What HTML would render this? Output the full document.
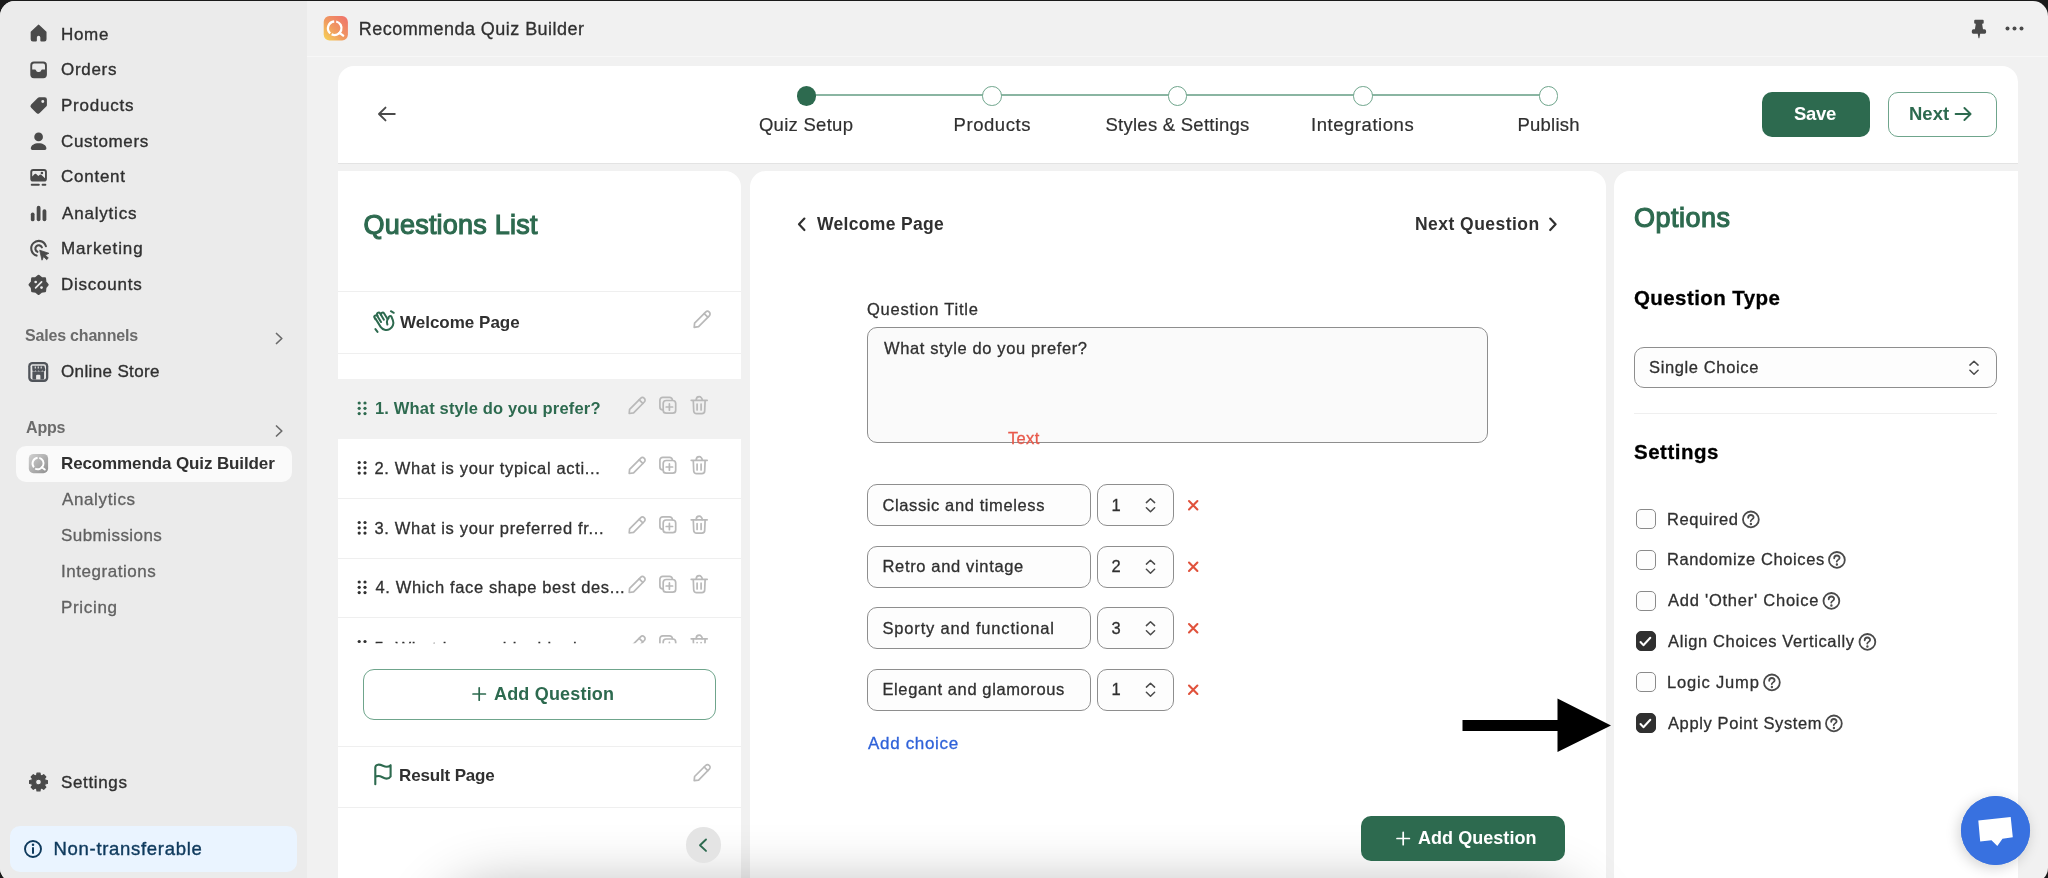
<!DOCTYPE html>
<html><head><meta charset="utf-8"><title>Recommenda Quiz Builder</title>
<style>
*{box-sizing:border-box;margin:0;padding:0}
html,body{width:2048px;height:878px;overflow:hidden;background:#1a1a1a;font-family:"Liberation Sans",sans-serif;color:#303030}
#win{position:absolute;left:0;top:1px;width:2048px;height:881px;border-radius:15px 15px 14px 14px;background:#f1f1f1;overflow:hidden;will-change:transform}
#side{position:absolute;left:0;top:0;width:307px;height:881px;background:#ebebeb}
.a{position:absolute}
.card{position:absolute;background:#fff}
.t{position:absolute;white-space:nowrap}
.inp{position:absolute;border:1px solid #8e8e8e;border-radius:10px;background:#fdfdfd}
.ln{position:absolute;height:1px;background:#efefef}
.cb{position:absolute;left:1635.5px;width:20px;height:20px;border:1px solid #8a8a8a;border-radius:5px;background:#fdfdfd}
.cb.on{background:#303030;border-color:#303030}
svg{position:absolute;overflow:visible}
</style></head><body>
<div id="win">
<div id="side"></div>

<div class="a" style="left:307px;top:54.5px;width:1741px;height:1px;background:#f7f7f7"></div>
<div class="card" style="left:338px;top:64.5px;width:1679.5px;height:97px;border-radius:16px 16px 0 0;box-shadow:0 1px 0 #e3e3e3"></div>
<div class="card" id="ql" style="left:338px;top:169.5px;width:403px;height:720px;border-radius:0 16px 0 0"></div>
<div class="card" id="mid" style="left:749.5px;top:169.5px;width:856px;height:720px;border-radius:16px 16px 0 0"></div>
<div class="card" id="opt" style="left:1613.5px;top:169.5px;width:404px;height:720px;border-radius:16px 0 0 0"></div>
<div class="a" style="left:438px;top:887px;width:1150px;height:120px;border-radius:70px;box-shadow:0 0 60px 0 rgba(0,0,0,.31)"></div>
<div class="a" style="left:16px;top:445px;width:275.5px;height:35.5px;border-radius:10px;background:#fafafa"></div>
<div class="a" style="left:10px;top:825px;width:287px;height:46px;border-radius:10px;background:#eaf4ff"></div>
<div class="a" style="left:806px;top:93px;width:742px;height:2px;background:#8ab5a2"></div>
<div class="a" style="left:796.5px;top:85px;width:19.5px;height:19.5px;border-radius:50%;background:#2d6a4f"></div>
<div class="a" style="left:982.0px;top:85px;width:19.5px;height:19.5px;border-radius:50%;background:#fff;border:1.3px solid #6fa58c"></div>
<div class="a" style="left:1167.5px;top:85px;width:19.5px;height:19.5px;border-radius:50%;background:#fff;border:1.3px solid #6fa58c"></div>
<div class="a" style="left:1353.25px;top:85px;width:19.5px;height:19.5px;border-radius:50%;background:#fff;border:1.3px solid #6fa58c"></div>
<div class="a" style="left:1538.5px;top:85px;width:19.5px;height:19.5px;border-radius:50%;background:#fff;border:1.3px solid #6fa58c"></div>
<div class="a" style="left:1761.5px;top:91px;width:108.5px;height:44.5px;border-radius:10px;background:#2d6a4f"></div>
<div class="a" style="left:1888px;top:91px;width:108.5px;height:44.5px;border-radius:10px;background:#fff;border:1px solid #6fa58c"></div>
<div class="ln" style="left:338px;top:290px;width:403px"></div>
<div class="ln" style="left:338px;top:351.5px;width:403px"></div>
<div class="a" style="left:338px;top:377.5px;width:403px;height:60px;background:#f1f1f1"></div>
<div class="ln" style="left:338px;top:497px;width:403px"></div>
<div class="ln" style="left:338px;top:556.5px;width:403px"></div>
<div class="ln" style="left:338px;top:616px;width:403px"></div>
<div class="ln" style="left:338px;top:744.5px;width:403px"></div>
<div class="ln" style="left:338px;top:805.5px;width:403px"></div>
<div class="a" style="left:363px;top:668px;width:353px;height:50.5px;border-radius:11px;background:#fff;border:1px solid #6fa58c"></div>
<div class="a" style="left:685.5px;top:826px;width:35.5px;height:35.5px;border-radius:50%;background:#e4e4e4"></div>
<div class="inp" style="left:867px;top:325.5px;width:621px;height:116.5px;background:#fafafa"></div>
<div class="inp" style="left:867px;top:483px;width:224px;height:42px"></div>
<div class="inp" style="left:1097px;top:483px;width:77px;height:42px"></div>
<div class="inp" style="left:867px;top:544.5px;width:224px;height:42px"></div>
<div class="inp" style="left:1097px;top:544.5px;width:77px;height:42px"></div>
<div class="inp" style="left:867px;top:606px;width:224px;height:42px"></div>
<div class="inp" style="left:1097px;top:606px;width:77px;height:42px"></div>
<div class="inp" style="left:867px;top:668px;width:224px;height:42px"></div>
<div class="inp" style="left:1097px;top:668px;width:77px;height:42px"></div>
<div class="a" style="left:1361px;top:815px;width:204px;height:45px;border-radius:10px;background:#2d6a4f"></div>
<div class="inp" style="left:1634px;top:346px;width:363px;height:41px"></div>
<div class="ln" style="left:1634px;top:412px;width:363px"></div>
<div class="cb" style="top:508px"></div>
<div class="cb" style="top:549px"></div>
<div class="cb" style="top:589.5px"></div>
<div class="cb on" style="top:630px"></div>
<div class="cb" style="top:671px"></div>
<div class="cb on" style="top:712px"></div>
<div class="a" style="left:1961px;top:795px;width:69px;height:69px;border-radius:50%;background:#3871e0;box-shadow:-2px 3px 14px rgba(0,0,0,.18)"></div>
<div class="t" style="left:61.00px;top:25px;font-size:17px;line-height:17px;color:#303030;letter-spacing:0.667px;-webkit-text-stroke:0.35px #303030;">Home</div>
<div class="t" style="left:61.00px;top:60px;font-size:17px;line-height:17px;color:#303030;letter-spacing:0.700px;-webkit-text-stroke:0.35px #303030;">Orders</div>
<div class="t" style="left:61.00px;top:96px;font-size:17px;line-height:17px;color:#303030;letter-spacing:0.786px;-webkit-text-stroke:0.35px #303030;">Products</div>
<div class="t" style="left:61.00px;top:132px;font-size:17px;line-height:17px;color:#303030;letter-spacing:0.625px;-webkit-text-stroke:0.35px #303030;">Customers</div>
<div class="t" style="left:61.00px;top:167px;font-size:17px;line-height:17px;color:#303030;letter-spacing:0.750px;-webkit-text-stroke:0.35px #303030;">Content</div>
<div class="t" style="left:62.00px;top:204px;font-size:17px;line-height:17px;color:#303030;letter-spacing:0.812px;-webkit-text-stroke:0.35px #303030;">Analytics</div>
<div class="t" style="left:61.00px;top:239px;font-size:17px;line-height:17px;color:#303030;letter-spacing:0.875px;-webkit-text-stroke:0.35px #303030;">Marketing</div>
<div class="t" style="left:61.00px;top:275px;font-size:17px;line-height:17px;color:#303030;letter-spacing:0.750px;-webkit-text-stroke:0.35px #303030;">Discounts</div>
<div class="t" style="left:61.00px;top:362px;font-size:17px;line-height:17px;color:#303030;letter-spacing:0.364px;-webkit-text-stroke:0.35px #303030;">Online Store</div>
<div class="t" style="left:61.00px;top:773px;font-size:17px;line-height:17px;color:#303030;letter-spacing:0.643px;-webkit-text-stroke:0.35px #303030;">Settings</div>
<div class="t" style="left:25.00px;top:327px;font-size:16px;line-height:16px;color:#6b6b6b;letter-spacing:-0.192px;font-weight:bold;">Sales channels</div>
<div class="t" style="left:26.00px;top:419px;font-size:16px;line-height:16px;color:#6b6b6b;letter-spacing:-0.167px;font-weight:bold;">Apps</div>
<div class="t" style="left:61.00px;top:454px;font-size:17px;line-height:17px;color:#303030;letter-spacing:-0.114px;font-weight:bold;">Recommenda Quiz Builder</div>
<div class="t" style="left:62.00px;top:490px;font-size:17px;line-height:17px;color:#616161;letter-spacing:0.625px;-webkit-text-stroke:0.3px #616161;">Analytics</div>
<div class="t" style="left:61.00px;top:526px;font-size:17px;line-height:17px;color:#616161;letter-spacing:0.450px;-webkit-text-stroke:0.3px #616161;">Submissions</div>
<div class="t" style="left:61.00px;top:562px;font-size:17px;line-height:17px;color:#616161;letter-spacing:0.545px;-webkit-text-stroke:0.3px #616161;">Integrations</div>
<div class="t" style="left:61.00px;top:598px;font-size:17px;line-height:17px;color:#616161;letter-spacing:0.667px;-webkit-text-stroke:0.3px #616161;">Pricing</div>
<div class="t" style="left:53.50px;top:839px;font-size:18.5px;line-height:18.5px;color:#0f3a5d;letter-spacing:0.700px;-webkit-text-stroke:0.4px #0f3a5d;">Non-transferable</div>
<div class="t" style="left:358.80px;top:19px;font-size:18px;line-height:18px;color:#303030;letter-spacing:0.455px;-webkit-text-stroke:0.3px #303030;">Recommenda Quiz Builder</div>
<div class="t" style="left:758.95px;top:115px;font-size:18.5px;line-height:18.5px;color:#303030;letter-spacing:0.278px;-webkit-text-stroke:0.2px #303030;">Quiz Setup</div>
<div class="t" style="left:953.50px;top:115px;font-size:18.5px;line-height:18.5px;color:#303030;letter-spacing:0.571px;-webkit-text-stroke:0.2px #303030;">Products</div>
<div class="t" style="left:1105.50px;top:115px;font-size:18.5px;line-height:18.5px;color:#303030;letter-spacing:0.250px;-webkit-text-stroke:0.2px #303030;">Styles &amp; Settings</div>
<div class="t" style="left:1311.00px;top:115px;font-size:18.5px;line-height:18.5px;color:#303030;letter-spacing:0.545px;-webkit-text-stroke:0.2px #303030;">Integrations</div>
<div class="t" style="left:1517.45px;top:115px;font-size:18.5px;line-height:18.5px;color:#303030;letter-spacing:0.250px;-webkit-text-stroke:0.2px #303030;">Publish</div>
<div class="t" style="left:1794.00px;top:104px;font-size:18.5px;line-height:18.5px;color:#fff;letter-spacing:-0.333px;font-weight:bold;">Save</div>
<div class="t" style="left:1909.00px;top:104px;font-size:18.5px;line-height:18.5px;color:#2d6a4f;font-weight:bold;">Next</div>
<div class="t" style="left:363.50px;top:211px;font-size:27px;line-height:27px;color:#2d6a4f;letter-spacing:0.215px;-webkit-text-stroke:1.15px #2d6a4f;">Questions List</div>
<div class="t" style="left:400.00px;top:313px;font-size:17px;line-height:17px;color:#303030;font-weight:bold;">Welcome Page</div>
<div class="t" style="left:375.00px;top:399px;font-size:16.5px;line-height:16.5px;color:#2d6a4f;letter-spacing:0.167px;font-weight:bold;">1. What style do you prefer?</div>
<div class="t" style="left:374.50px;top:459px;font-size:16.5px;line-height:16.5px;color:#303030;letter-spacing:0.667px;-webkit-text-stroke:0.3px #303030;">2. What is your typical acti...</div>
<div class="t" style="left:374.50px;top:519px;font-size:16.5px;line-height:16.5px;color:#303030;letter-spacing:0.667px;-webkit-text-stroke:0.3px #303030;">3. What is your preferred fr...</div>
<div class="t" style="left:375.50px;top:578px;font-size:16.5px;line-height:16.5px;color:#303030;letter-spacing:0.633px;-webkit-text-stroke:0.3px #303030;">4. Which face shape best des...</div>
<div class="t" style="left:374.50px;top:639px;font-size:16.5px;line-height:16.5px;color:#303030;letter-spacing:0.857px;-webkit-text-stroke:0.3px #303030;">5. What is your ideal budg...</div>
<div class="t" style="left:494.00px;top:684px;font-size:18px;line-height:18px;color:#2d6a4f;letter-spacing:0.182px;font-weight:bold;">Add Question</div>
<div class="t" style="left:399.00px;top:766px;font-size:17px;line-height:17px;color:#303030;letter-spacing:-0.150px;font-weight:bold;">Result Page</div>
<div class="t" style="left:817.00px;top:215px;font-size:17.5px;line-height:17.5px;color:#303030;letter-spacing:0.318px;font-weight:bold;">Welcome Page</div>
<div class="t" style="left:1415.00px;top:215px;font-size:17.5px;line-height:17.5px;color:#303030;letter-spacing:0.458px;font-weight:bold;">Next Question</div>
<div class="t" style="left:867.00px;top:300px;font-size:16.5px;line-height:16.5px;color:#303030;letter-spacing:0.769px;-webkit-text-stroke:0.3px #303030;">Question Title</div>
<div class="t" style="left:884.00px;top:339px;font-size:16.5px;line-height:16.5px;color:#303030;letter-spacing:0.625px;-webkit-text-stroke:0.3px #303030;">What style do you prefer?</div>
<div class="t" style="left:1008.00px;top:429px;font-size:16.5px;line-height:16.5px;color:#e8594b;letter-spacing:0.333px;-webkit-text-stroke:0.3px #e8594b;">Text</div>
<div class="t" style="left:882.50px;top:496px;font-size:16.5px;line-height:16.5px;color:#303030;letter-spacing:0.605px;-webkit-text-stroke:0.3px #303030;">Classic and timeless</div>
<div class="t" style="left:1111.50px;top:496px;font-size:16.5px;line-height:16.5px;color:#303030;-webkit-text-stroke:0.3px #303030;">1</div>
<div class="t" style="left:882.50px;top:557px;font-size:16.5px;line-height:16.5px;color:#303030;letter-spacing:0.656px;-webkit-text-stroke:0.3px #303030;">Retro and vintage</div>
<div class="t" style="left:1111.50px;top:557px;font-size:16.5px;line-height:16.5px;color:#303030;-webkit-text-stroke:0.3px #303030;">2</div>
<div class="t" style="left:882.50px;top:619px;font-size:16.5px;line-height:16.5px;color:#303030;letter-spacing:0.825px;-webkit-text-stroke:0.3px #303030;">Sporty and functional</div>
<div class="t" style="left:1111.50px;top:619px;font-size:16.5px;line-height:16.5px;color:#303030;-webkit-text-stroke:0.3px #303030;">3</div>
<div class="t" style="left:882.50px;top:680px;font-size:16.5px;line-height:16.5px;color:#303030;letter-spacing:0.600px;-webkit-text-stroke:0.3px #303030;">Elegant and glamorous</div>
<div class="t" style="left:1111.50px;top:680px;font-size:16.5px;line-height:16.5px;color:#303030;-webkit-text-stroke:0.3px #303030;">1</div>
<div class="t" style="left:868.00px;top:734px;font-size:17px;line-height:17px;color:#2f62d9;letter-spacing:0.667px;-webkit-text-stroke:0.3px #2f62d9;">Add choice</div>
<div class="t" style="left:1418.00px;top:828px;font-size:18px;line-height:18px;color:#fff;letter-spacing:0.045px;font-weight:bold;">Add Question</div>
<div class="t" style="left:1634.00px;top:204px;font-size:27px;line-height:27px;color:#2d6a4f;letter-spacing:0.500px;-webkit-text-stroke:1.15px #2d6a4f;">Options</div>
<div class="t" style="left:1634.00px;top:287px;font-size:20.5px;line-height:20.5px;color:#000;letter-spacing:0.417px;font-weight:bold;-webkit-text-stroke:0.3px #000;">Question Type</div>
<div class="t" style="left:1649.00px;top:358px;font-size:16.5px;line-height:16.5px;color:#303030;letter-spacing:0.625px;-webkit-text-stroke:0.3px #303030;">Single Choice</div>
<div class="t" style="left:1634.00px;top:441px;font-size:20.5px;line-height:20.5px;color:#000;letter-spacing:0.500px;font-weight:bold;-webkit-text-stroke:0.3px #000;">Settings</div>
<div class="t" style="left:1667.00px;top:510px;font-size:16.5px;line-height:16.5px;color:#303030;letter-spacing:0.571px;-webkit-text-stroke:0.3px #303030;">Required</div>
<div class="t" style="left:1667.00px;top:550px;font-size:16.5px;line-height:16.5px;color:#303030;letter-spacing:0.594px;-webkit-text-stroke:0.3px #303030;">Randomize Choices</div>
<div class="t" style="left:1668.00px;top:591px;font-size:16.5px;line-height:16.5px;color:#303030;letter-spacing:0.765px;-webkit-text-stroke:0.3px #303030;">Add 'Other' Choice</div>
<div class="t" style="left:1668.00px;top:632px;font-size:16.5px;line-height:16.5px;color:#303030;letter-spacing:0.630px;-webkit-text-stroke:0.3px #303030;">Align Choices Vertically</div>
<div class="t" style="left:1667.00px;top:673px;font-size:16.5px;line-height:16.5px;color:#303030;letter-spacing:0.833px;-webkit-text-stroke:0.3px #303030;">Logic Jump</div>
<div class="t" style="left:1668.00px;top:714px;font-size:16.5px;line-height:16.5px;color:#303030;letter-spacing:0.618px;-webkit-text-stroke:0.3px #303030;">Apply Point System</div>
<svg style="left:0;top:-1px" width="2048" height="878" viewBox="0 0 2048 878" fill="none">
<defs><linearGradient id="og" x1="0" y1="1" x2="1" y2="0"><stop offset="0" stop-color="#f7d656"/><stop offset=".45" stop-color="#f09a60"/><stop offset="1" stop-color="#ef6f6c"/></linearGradient><linearGradient id="gg" x1="0" y1="0" x2="1" y2="1"><stop offset="0" stop-color="#d2d2d2"/><stop offset="1" stop-color="#8f8f8f"/></linearGradient></defs>
<g transform="translate(26.30 21.00) scale(1.23)" fill="#4a4a4a"><path d="M10 3.75L15.65 9.2V14.9a1 1 0 0 1-1 1H12.2V13.4a2.2 2.2 0 0 0-4.4 0v2.5H5.35a1 1 0 0 1-1-1V9.2z" stroke="#4a4a4a" stroke-width="1.6" stroke-linejoin="round"/></g>
<g transform="translate(26.30 57.55) scale(1.23)" fill="#4a4a4a"><path fill-rule="evenodd" d="M6.2 3.25h7.6a2.95 2.95 0 0 1 2.95 2.95v7.6a2.95 2.95 0 0 1-2.95 2.95H6.2a2.95 2.95 0 0 1-2.95-2.95V6.2A2.95 2.95 0 0 1 6.2 3.25zM6.3 4.9A1.5 1.5 0 0 0 4.8 6.4v3.3h2.3a.8.8 0 0 1 .75.55 2.25 2.25 0 0 0 4.3 0 .8.8 0 0 1 .75-.55h2.3V6.4a1.5 1.5 0 0 0-1.5-1.5z"/></g>
<g transform="translate(26.30 93.35) scale(1.23)" fill="#4a4a4a"><path fill-rule="evenodd" d="M10.6 3.25h4.4A1.75 1.75 0 0 1 16.75 5v4.4a1.9 1.9 0 0 1-.56 1.34l-5.3 5.3a1.9 1.9 0 0 1-2.68 0L3.96 11.8a1.9 1.9 0 0 1 0-2.68l5.3-5.3a1.9 1.9 0 0 1 1.34-.56zM13.4 7.8a1.2 1.2 0 1 0 0-2.4 1.2 1.2 0 0 0 0 2.4z"/></g>
<g transform="translate(26.30 128.90) scale(1.23)" fill="#4a4a4a"><circle cx="10" cy="6.5" r="3.55"/><path d="M3.7 15.6c0-2.3 2.8-4 6.3-4s6.3 1.7 6.3 4v.3a1.2 1.2 0 0 1-1.2 1.2H4.9a1.2 1.2 0 0 1-1.2-1.2z"/></g>
<g transform="translate(26.30 165.10) scale(1.23)" fill="#4a4a4a"><path fill-rule="evenodd" d="M5.6 3.1h8.8a2.35 2.35 0 0 1 2.35 2.35v5.6a2.35 2.35 0 0 1-2.35 2.35H5.6a2.35 2.35 0 0 1-2.35-2.35v-5.6A2.35 2.35 0 0 1 5.6 3.1zM5.7 4.7a.9.9 0 0 0-.9.9v3.6l2-1.9a.9.9 0 0 1 1.25 0l1.7 1.65 1.2-1.1a.9.9 0 0 1 1.2 0l3.05 2.8V5.6a.9.9 0 0 0-.9-.9z"/><circle cx="12.7" cy="6.4" r="1.05"/><rect x="3.6" y="15.2" width="7.4" height="1.6" rx=".8"/><rect x="12.4" y="15.2" width="3.9" height="1.6" rx=".8"/></g>
<g transform="translate(26.30 200.70) scale(1.23)" fill="#4a4a4a"><rect x="3.7" y="9.5" width="3" height="7.2" rx="1.5"/><rect x="8.45" y="4.1" width="3.1" height="12.6" rx="1.55"/><rect x="13.2" y="6.9" width="3.1" height="9.8" rx="1.55"/></g>
<g stroke="#4a4a4a" stroke-width="2.1" stroke-linecap="round" fill="none"><path d="M45.9 246.2A7.5 7.5 0 1 0 36.6 255.6"/><path d="M41.9 247.4A3.4 3.4 0 1 0 37.4 251.8"/></g>
<path d="M39.7 250.2l9.2 3.1-3.6 1.7 3 3.1-1.7 1.6-3-3.1-1.6 3.6z" fill="#4a4a4a" stroke="#4a4a4a" stroke-width=".8" stroke-linejoin="round"/>
<path d="M38.60 275.90 L41.36 278.15 L44.89 278.51 L45.25 282.04 L47.50 284.80 L45.25 287.56 L44.89 291.09 L41.36 291.45 L38.60 293.70 L35.84 291.45 L32.31 291.09 L31.95 287.56 L29.70 284.80 L31.95 282.04 L32.31 278.51 L35.84 278.15Z" fill="#4a4a4a" stroke="#4a4a4a" stroke-width="2.4" stroke-linejoin="round"/>
<g stroke="#ebebeb" stroke-width="1.7" stroke-linecap="round"><path d="M35.6 287.8L41.6 281.8"/></g><circle cx="35.7" cy="282" r="1.35" fill="#ebebeb"/><circle cx="41.5" cy="287.6" r="1.35" fill="#ebebeb"/>
<rect x="28.2" y="362" width="20.1" height="19.9" rx="4.2" fill="#50545a"/><rect x="30.5" y="364.3" width="15.5" height="15.3" rx="2" fill="#e9e9e9"/>
<path d="M32.2 365.7h12.1l1 3.9a1.6 1.6 0 0 1-3.2.5 1.65 1.65 0 0 1-3.3 0 1.65 1.65 0 0 1-3.3 0 1.6 1.6 0 0 1-3.2-.5z" fill="#50545a"/><path d="M32.4 371.6h11.7v6.6a1.2 1.2 0 0 1-1.2 1.2h-2.5v-3.6a1.1 1.1 0 0 0-1.1-1.1h-2.1a1.1 1.1 0 0 0-1.1 1.1v3.6h-2.5a1.2 1.2 0 0 1-1.2-1.2z" fill="#50545a"/>
<g stroke="#e9e9e9" stroke-width="1.1"><path d="M35.3 366.4v2.2M38.25 366.4v2.2M41.2 366.4v2.2"/></g>
<rect x="28.8" y="454" width="19.3" height="19.2" rx="4.6" fill="url(#gg)"/>
<g stroke="#fff" stroke-width="1.9" fill="none" stroke-linecap="butt"><path d="M37.6 457.8A5.8 5.8 0 0 0 33.9 467.3"/><path d="M35.2 468.6A5.8 5.8 0 1 0 39.3 457.8"/><path d="M41.7 467.2L44.8 469.6" stroke-linecap="round"/></g>
<path d="M45.15 780.16 L47.37 780.48 L47.37 783.52 L45.15 783.84 L44.50 785.40 L45.85 787.20 L43.70 789.35 L41.90 788.00 L40.34 788.65 L40.02 790.87 L36.98 790.87 L36.66 788.65 L35.10 788.00 L33.30 789.35 L31.15 787.20 L32.50 785.40 L31.85 783.84 L29.63 783.52 L29.63 780.48 L31.85 780.16 L32.50 778.60 L31.15 776.80 L33.30 774.65 L35.10 776.00 L36.66 775.35 L36.98 773.13 L40.02 773.13 L40.34 775.35 L41.90 776.00 L43.70 774.65 L45.85 776.80 L44.50 778.60ZM41.4 782a2.9 2.9 0 1 0 -5.8 0a2.9 2.9 0 1 0 5.8 0z" fill="#4a4a4a" fill-rule="evenodd" stroke="#4a4a4a" stroke-width="1.2" stroke-linejoin="round"/>
<circle cx="33" cy="849" r="8" stroke="#0f3a5d" stroke-width="1.9"/><path d="M33 848v5" stroke="#0f3a5d" stroke-width="2" stroke-linecap="round"/><circle cx="33" cy="844.7" r="1.25" fill="#0f3a5d"/>
<path d="M276.5 333.5l5.3 5-5.3 5" stroke="#6b6b6b" stroke-width="1.7" stroke-linecap="round" stroke-linejoin="round"/>
<path d="M276.5 426l5.3 5-5.3 5" stroke="#6b6b6b" stroke-width="1.7" stroke-linecap="round" stroke-linejoin="round"/>
<rect x="323.7" y="16.1" width="24.2" height="24.3" rx="5.8" fill="url(#og)"/>
<g stroke="#fff" stroke-width="2.3" fill="none"><path d="M334.2 21.5A6.85 6.85 0 0 0 330.2 33.4"/><path d="M331.6 34.3A6.85 6.85 0 1 0 336.2 21.5"/><path d="M339.5 32.9L343.2 35.6" stroke-linecap="round"/></g>
<path d="M1975.8 19.8h6.9a1 1 0 0 1 1 1v1.9a1 1 0 0 1-1 1h-.6l.9 5.6h1.5a1.6 1.6 0 0 1 1.6 1.6v1.4a1.4 1.4 0 0 1-1.4 1.4h-4.5l-.8 4.2a.45.45 0 0 1-.9 0l-.8-4.2h-4.5a1.4 1.4 0 0 1-1.4-1.4v-1.4a1.6 1.6 0 0 1 1.6-1.6h1.5l.9-5.6h-.6a1 1 0 0 1-1-1v-1.9a1 1 0 0 1 1-1z" fill="#4a4a4a"/>
<circle cx="2007.5" cy="28.5" r="2" fill="#4a4a4a"/>
<circle cx="2014.5" cy="28.5" r="2" fill="#4a4a4a"/>
<circle cx="2021.5" cy="28.5" r="2" fill="#4a4a4a"/>
<path d="M394.8 114H379.3M385.5 107.6L379 114l6.5 6.4" stroke="#4a4a4a" stroke-width="1.9" stroke-linecap="round" stroke-linejoin="round"/>
<path d="M1955.6 114h14.6M1964.4 108l6.2 6-6.2 6" stroke="#2d6a4f" stroke-width="1.9" stroke-linecap="round" stroke-linejoin="round"/>
<g transform="translate(384 321.6) scale(1.06) translate(-384 -321)" stroke="#2d6a4f" stroke-width="1.9" stroke-linecap="round" stroke-linejoin="round"><path d="M375.9 318.1l4.9 7.9a6.6 6.6 0 0 0 11.6-6.1l-1.3-3.4a1.45 1.45 0 0 0-2.7 1l-1.2 1.7c-.5 1-.9 2 0 4.6"/><path d="M381.2 321.4l-3.5-5.6a1.5 1.5 0 0 0-2.6 1.6l.8 1.3"/><path d="M383.9 319.2l-3.7-6a1.5 1.5 0 0 0-2.6 1.6l.4.7"/><path d="M387.2 318.3l-3.2-5.1a1.5 1.5 0 0 0-2.6 1.6"/><path d="M390.5 311.2l2.7 1.5"/><path d="M375.9 328.1l2 2.6"/></g>
<g transform="translate(0 0.6)" stroke="#b9b9b9" stroke-width="1.7" stroke-linejoin="round" stroke-linecap="round"><path d="M629.6 408.7L640.6 397.7A2.6 2.6 0 0 1 644.3 401.4L633.6 412.3L629.2 412.9Z"/><path d="M639.2 399.2L642.8 402.8"/></g>
<g transform="translate(0 0.6)" stroke="#b9b9b9" stroke-width="1.7" stroke-linejoin="round" stroke-linecap="round"><path d="M663 409.2h-.2a2.9 2.9 0 0 1-2.9-2.9v-6.7a2.9 2.9 0 0 1 2.9-2.9h6.7a2.9 2.9 0 0 1 2.9 2.9"/><rect x="663.2" y="399.9" width="12.5" height="12.7" rx="3"/><path d="M669.4 403.3v6.3M666.2 406.4h6.4"/></g>
<g transform="translate(0 0.6)" stroke="#b9b9b9" stroke-width="1.7" stroke-linejoin="round" stroke-linecap="round"><path d="M691.2 399.7h16"/><path d="M696.2 399.5a3 3.4 0 0 1 6 0"/><path d="M693.3 400.2l.4 10a2.9 2.9 0 0 0 2.9 2.9h5.2a2.9 2.9 0 0 0 2.9-2.9l.4-10"/><path d="M697.1 403.4v6M701.1 403.4v6"/></g>
<g transform="translate(0 60.6)" stroke="#b9b9b9" stroke-width="1.7" stroke-linejoin="round" stroke-linecap="round"><path d="M629.6 408.7L640.6 397.7A2.6 2.6 0 0 1 644.3 401.4L633.6 412.3L629.2 412.9Z"/><path d="M639.2 399.2L642.8 402.8"/></g>
<g transform="translate(0 60.6)" stroke="#b9b9b9" stroke-width="1.7" stroke-linejoin="round" stroke-linecap="round"><path d="M663 409.2h-.2a2.9 2.9 0 0 1-2.9-2.9v-6.7a2.9 2.9 0 0 1 2.9-2.9h6.7a2.9 2.9 0 0 1 2.9 2.9"/><rect x="663.2" y="399.9" width="12.5" height="12.7" rx="3"/><path d="M669.4 403.3v6.3M666.2 406.4h6.4"/></g>
<g transform="translate(0 60.6)" stroke="#b9b9b9" stroke-width="1.7" stroke-linejoin="round" stroke-linecap="round"><path d="M691.2 399.7h16"/><path d="M696.2 399.5a3 3.4 0 0 1 6 0"/><path d="M693.3 400.2l.4 10a2.9 2.9 0 0 0 2.9 2.9h5.2a2.9 2.9 0 0 0 2.9-2.9l.4-10"/><path d="M697.1 403.4v6M701.1 403.4v6"/></g>
<g transform="translate(0 120.1)" stroke="#b9b9b9" stroke-width="1.7" stroke-linejoin="round" stroke-linecap="round"><path d="M629.6 408.7L640.6 397.7A2.6 2.6 0 0 1 644.3 401.4L633.6 412.3L629.2 412.9Z"/><path d="M639.2 399.2L642.8 402.8"/></g>
<g transform="translate(0 120.1)" stroke="#b9b9b9" stroke-width="1.7" stroke-linejoin="round" stroke-linecap="round"><path d="M663 409.2h-.2a2.9 2.9 0 0 1-2.9-2.9v-6.7a2.9 2.9 0 0 1 2.9-2.9h6.7a2.9 2.9 0 0 1 2.9 2.9"/><rect x="663.2" y="399.9" width="12.5" height="12.7" rx="3"/><path d="M669.4 403.3v6.3M666.2 406.4h6.4"/></g>
<g transform="translate(0 120.1)" stroke="#b9b9b9" stroke-width="1.7" stroke-linejoin="round" stroke-linecap="round"><path d="M691.2 399.7h16"/><path d="M696.2 399.5a3 3.4 0 0 1 6 0"/><path d="M693.3 400.2l.4 10a2.9 2.9 0 0 0 2.9 2.9h5.2a2.9 2.9 0 0 0 2.9-2.9l.4-10"/><path d="M697.1 403.4v6M701.1 403.4v6"/></g>
<g transform="translate(0 179.6)" stroke="#b9b9b9" stroke-width="1.7" stroke-linejoin="round" stroke-linecap="round"><path d="M629.6 408.7L640.6 397.7A2.6 2.6 0 0 1 644.3 401.4L633.6 412.3L629.2 412.9Z"/><path d="M639.2 399.2L642.8 402.8"/></g>
<g transform="translate(0 179.6)" stroke="#b9b9b9" stroke-width="1.7" stroke-linejoin="round" stroke-linecap="round"><path d="M663 409.2h-.2a2.9 2.9 0 0 1-2.9-2.9v-6.7a2.9 2.9 0 0 1 2.9-2.9h6.7a2.9 2.9 0 0 1 2.9 2.9"/><rect x="663.2" y="399.9" width="12.5" height="12.7" rx="3"/><path d="M669.4 403.3v6.3M666.2 406.4h6.4"/></g>
<g transform="translate(0 179.6)" stroke="#b9b9b9" stroke-width="1.7" stroke-linejoin="round" stroke-linecap="round"><path d="M691.2 399.7h16"/><path d="M696.2 399.5a3 3.4 0 0 1 6 0"/><path d="M693.3 400.2l.4 10a2.9 2.9 0 0 0 2.9 2.9h5.2a2.9 2.9 0 0 0 2.9-2.9l.4-10"/><path d="M697.1 403.4v6M701.1 403.4v6"/></g>
<g transform="translate(0 239.1)" stroke="#b9b9b9" stroke-width="1.7" stroke-linejoin="round" stroke-linecap="round"><path d="M629.6 408.7L640.6 397.7A2.6 2.6 0 0 1 644.3 401.4L633.6 412.3L629.2 412.9Z"/><path d="M639.2 399.2L642.8 402.8"/></g>
<g transform="translate(0 239.1)" stroke="#b9b9b9" stroke-width="1.7" stroke-linejoin="round" stroke-linecap="round"><path d="M663 409.2h-.2a2.9 2.9 0 0 1-2.9-2.9v-6.7a2.9 2.9 0 0 1 2.9-2.9h6.7a2.9 2.9 0 0 1 2.9 2.9"/><rect x="663.2" y="399.9" width="12.5" height="12.7" rx="3"/><path d="M669.4 403.3v6.3M666.2 406.4h6.4"/></g>
<g transform="translate(0 239.1)" stroke="#b9b9b9" stroke-width="1.7" stroke-linejoin="round" stroke-linecap="round"><path d="M691.2 399.7h16"/><path d="M696.2 399.5a3 3.4 0 0 1 6 0"/><path d="M693.3 400.2l.4 10a2.9 2.9 0 0 0 2.9 2.9h5.2a2.9 2.9 0 0 0 2.9-2.9l.4-10"/><path d="M697.1 403.4v6M701.1 403.4v6"/></g>
<g transform="translate(65 -85.6)" stroke="#b9b9b9" stroke-width="1.7" stroke-linejoin="round" stroke-linecap="round"><path d="M629.6 408.7L640.6 397.7A2.6 2.6 0 0 1 644.3 401.4L633.6 412.3L629.2 412.9Z"/><path d="M639.2 399.2L642.8 402.8"/></g>
<g transform="translate(65 367.8)" stroke="#b9b9b9" stroke-width="1.7" stroke-linejoin="round" stroke-linecap="round"><path d="M629.6 408.7L640.6 397.7A2.6 2.6 0 0 1 644.3 401.4L633.6 412.3L629.2 412.9Z"/><path d="M639.2 399.2L642.8 402.8"/></g>
<circle cx="359.2" cy="403.0" r="1.6" fill="#2d6a4f"/>
<circle cx="359.2" cy="408.3" r="1.6" fill="#2d6a4f"/>
<circle cx="359.2" cy="413.6" r="1.6" fill="#2d6a4f"/>
<circle cx="365.0" cy="403.0" r="1.6" fill="#2d6a4f"/>
<circle cx="365.0" cy="408.3" r="1.6" fill="#2d6a4f"/>
<circle cx="365.0" cy="413.6" r="1.6" fill="#2d6a4f"/>
<circle cx="359.2" cy="462.5" r="1.6" fill="#303030"/>
<circle cx="359.2" cy="467.8" r="1.6" fill="#303030"/>
<circle cx="359.2" cy="473.1" r="1.6" fill="#303030"/>
<circle cx="365.0" cy="462.5" r="1.6" fill="#303030"/>
<circle cx="365.0" cy="467.8" r="1.6" fill="#303030"/>
<circle cx="365.0" cy="473.1" r="1.6" fill="#303030"/>
<circle cx="359.2" cy="522.5" r="1.6" fill="#303030"/>
<circle cx="359.2" cy="527.8" r="1.6" fill="#303030"/>
<circle cx="359.2" cy="533.0999999999999" r="1.6" fill="#303030"/>
<circle cx="365.0" cy="522.5" r="1.6" fill="#303030"/>
<circle cx="365.0" cy="527.8" r="1.6" fill="#303030"/>
<circle cx="365.0" cy="533.0999999999999" r="1.6" fill="#303030"/>
<circle cx="359.2" cy="582.0" r="1.6" fill="#303030"/>
<circle cx="359.2" cy="587.3" r="1.6" fill="#303030"/>
<circle cx="359.2" cy="592.5999999999999" r="1.6" fill="#303030"/>
<circle cx="365.0" cy="582.0" r="1.6" fill="#303030"/>
<circle cx="365.0" cy="587.3" r="1.6" fill="#303030"/>
<circle cx="365.0" cy="592.5999999999999" r="1.6" fill="#303030"/>
<circle cx="359.2" cy="641.5" r="1.6" fill="#303030"/>
<circle cx="359.2" cy="646.8" r="1.6" fill="#303030"/>
<circle cx="359.2" cy="652.0999999999999" r="1.6" fill="#303030"/>
<circle cx="365.0" cy="641.5" r="1.6" fill="#303030"/>
<circle cx="365.0" cy="646.8" r="1.6" fill="#303030"/>
<circle cx="365.0" cy="652.0999999999999" r="1.6" fill="#303030"/>
<rect x="338" y="643.3" width="403" height="25" fill="#fff"/>
<path d="M479.2 687.8v12.4M473 694h12.4" stroke="#2d6a4f" stroke-width="1.7" stroke-linecap="round"/>
<path d="M375.3 784.2V767.5Q375.3 765.2 378 764.7C381.5 764.2 383.5 766.8 386.5 766.8C388.3 766.8 389.5 766.2 390.6 765.2V776.5C389.8 777.8 388.3 778.6 386.5 778.6C383.5 778.6 381.5 776 378.5 776C377 776 376 776.5 375.3 777" stroke="#2d6a4f" stroke-width="2.1" stroke-linecap="round" stroke-linejoin="round"/>
<path d="M706 839.5l-6 5.7 6 5.7" stroke="#2d6a4f" stroke-width="1.9" stroke-linecap="round" stroke-linejoin="round"/>
<path d="M804.4 218.6l-5.4 5.7 5.4 5.7" stroke="#303030" stroke-width="2.2" stroke-linecap="round" stroke-linejoin="round"/>
<path d="M1550.2 218.6l5.4 5.7-5.4 5.7" stroke="#303030" stroke-width="2.2" stroke-linecap="round" stroke-linejoin="round"/>
<path d="M1146.4 502.59999999999997l4.1-3.9 4.1 3.9M1146.4 507.8l4.1 3.9 4.1-3.9" stroke="#4a4a4a" stroke-width="1.5" stroke-linecap="round" stroke-linejoin="round"/>
<path d="M1189 501.0l8.4 8.4M1197.4 501.0l-8.4 8.4" stroke="#e0523c" stroke-width="2.1" stroke-linecap="round"/>
<path d="M1146.4 564.1l4.1-3.9 4.1 3.9M1146.4 569.3000000000001l4.1 3.9 4.1-3.9" stroke="#4a4a4a" stroke-width="1.5" stroke-linecap="round" stroke-linejoin="round"/>
<path d="M1189 562.5l8.4 8.4M1197.4 562.5l-8.4 8.4" stroke="#e0523c" stroke-width="2.1" stroke-linecap="round"/>
<path d="M1146.4 625.6l4.1-3.9 4.1 3.9M1146.4 630.8000000000001l4.1 3.9 4.1-3.9" stroke="#4a4a4a" stroke-width="1.5" stroke-linecap="round" stroke-linejoin="round"/>
<path d="M1189 624.0l8.4 8.4M1197.4 624.0l-8.4 8.4" stroke="#e0523c" stroke-width="2.1" stroke-linecap="round"/>
<path d="M1146.4 687.1l4.1-3.9 4.1 3.9M1146.4 692.3000000000001l4.1 3.9 4.1-3.9" stroke="#4a4a4a" stroke-width="1.5" stroke-linecap="round" stroke-linejoin="round"/>
<path d="M1189 685.5l8.4 8.4M1197.4 685.5l-8.4 8.4" stroke="#e0523c" stroke-width="2.1" stroke-linecap="round"/>
<path d="M1969.9 365.09999999999997l4.1-3.9 4.1 3.9M1969.9 370.3l4.1 3.9 4.1-3.9" stroke="#4a4a4a" stroke-width="1.5" stroke-linecap="round" stroke-linejoin="round"/>
<path d="M1403.2 832.3v12.4M1397 838.5h12.4" stroke="#fff" stroke-width="1.7" stroke-linecap="round"/>
<path d="M1462.5 720h95v-21.5L1611 725.5l-53.5 26.5V731h-95z" fill="#000"/>
<path d="M1640.5 642.0l2.9 3.2 6.9-7.5" stroke="#fff" stroke-width="2" stroke-linecap="round" stroke-linejoin="round"/>
<path d="M1640.5 724.0l2.9 3.2 6.9-7.5" stroke="#fff" stroke-width="2" stroke-linecap="round" stroke-linejoin="round"/>
<g transform="translate(1750.9 519.4)" stroke="#4a4a4a" stroke-width="1.8" stroke-linecap="round"><circle r="7.9"/><path d="M-2.7-1.6C-2.7-3.3-1.6-4.4 0-4.4C1.6-4.4 2.7-3.3 2.7-1.9C2.7-.2 0 .1-.15 1.7"/><circle cy="4.6" r=".5" fill="#4a4a4a" stroke-width="1.4"/></g>
<g transform="translate(1836.9 559.9)" stroke="#4a4a4a" stroke-width="1.8" stroke-linecap="round"><circle r="7.9"/><path d="M-2.7-1.6C-2.7-3.3-1.6-4.4 0-4.4C1.6-4.4 2.7-3.3 2.7-1.9C2.7-.2 0 .1-.15 1.7"/><circle cy="4.6" r=".5" fill="#4a4a4a" stroke-width="1.4"/></g>
<g transform="translate(1831.4 600.9)" stroke="#4a4a4a" stroke-width="1.8" stroke-linecap="round"><circle r="7.9"/><path d="M-2.7-1.6C-2.7-3.3-1.6-4.4 0-4.4C1.6-4.4 2.7-3.3 2.7-1.9C2.7-.2 0 .1-.15 1.7"/><circle cy="4.6" r=".5" fill="#4a4a4a" stroke-width="1.4"/></g>
<g transform="translate(1867.4 641.9)" stroke="#4a4a4a" stroke-width="1.8" stroke-linecap="round"><circle r="7.9"/><path d="M-2.7-1.6C-2.7-3.3-1.6-4.4 0-4.4C1.6-4.4 2.7-3.3 2.7-1.9C2.7-.2 0 .1-.15 1.7"/><circle cy="4.6" r=".5" fill="#4a4a4a" stroke-width="1.4"/></g>
<g transform="translate(1771.9 682.4)" stroke="#4a4a4a" stroke-width="1.8" stroke-linecap="round"><circle r="7.9"/><path d="M-2.7-1.6C-2.7-3.3-1.6-4.4 0-4.4C1.6-4.4 2.7-3.3 2.7-1.9C2.7-.2 0 .1-.15 1.7"/><circle cy="4.6" r=".5" fill="#4a4a4a" stroke-width="1.4"/></g>
<g transform="translate(1833.9 723.4)" stroke="#4a4a4a" stroke-width="1.8" stroke-linecap="round"><circle r="7.9"/><path d="M-2.7-1.6C-2.7-3.3-1.6-4.4 0-4.4C1.6-4.4 2.7-3.3 2.7-1.9C2.7-.2 0 .1-.15 1.7"/><circle cy="4.6" r=".5" fill="#4a4a4a" stroke-width="1.4"/></g>
<circle cx="1995.5" cy="830.5" r="34.5" fill="#3871e0"/>
<path d="M1978.3 820.6L2010.7 817.1L2012.8 837.3L2002.5 838.8L1997.3 845.9L1991.5 840.3L1980.2 841.4Z" fill="#fff"/>
</svg>
</div></body></html>
